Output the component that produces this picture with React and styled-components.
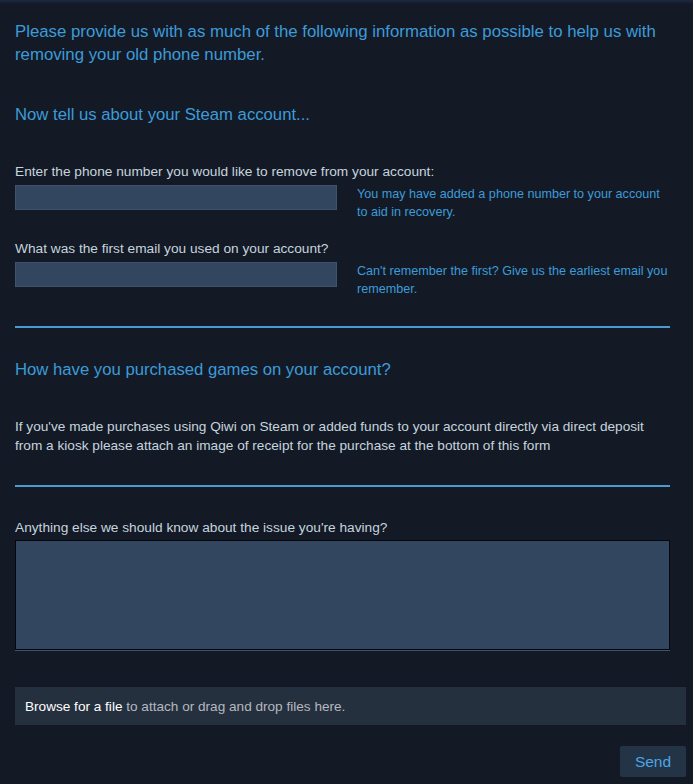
import React from "react";
import styled, { createGlobalStyle } from "styled-components";

const Global = createGlobalStyle`
  html, body { margin: 0; padding: 0; background: #131a25; }
  body { font-family: "Liberation Sans", Arial, sans-serif; }
`;

const Page = styled.div`
  min-height: 784px;
  box-sizing: border-box;
  background: linear-gradient(to bottom, #1a2a44 0px, #131a25 4px, #131a25 100%);
  padding: 20px 7px 7px 15px;
`;

const Fields = styled.div`
  width: 655px;
`;

const Intro = styled.p`
  margin: 0;
  font-size: 16.8px;
  line-height: 23px;
  color: #3d9bd9;
`;

const Heading = styled.h2`
  margin: ${(p) => p.$mt || 0}px 0 0;
  font-size: 16.7px;
  font-weight: normal;
  line-height: 22px;
  color: #3d9bd9;
`;

const Label = styled.div`
  margin-top: ${(p) => p.$mt || 0}px;
  font-size: 13.7px;
  line-height: 18px;
  color: #c6d4df;
`;

const FieldRow = styled.div`
  display: flex;
  align-items: flex-start;
  gap: 20px;
  margin-top: 4px;
`;

const TextInput = styled.input`
  width: 322px;
  height: 25px;
  box-sizing: border-box;
  margin: 0;
  padding: 0 6px;
  background: #32465f;
  border: 1px solid #3d536d;
  border-radius: 0;
  color: #c6d4df;
  outline: none;
  flex: none;
`;

const Hint = styled.div`
  margin-top: 0;
  font-size: 12.6px;
  line-height: 18px;
  color: #3d9bd9;
`;

const Divider = styled.hr`
  margin: ${(p) => p.$mt || 0}px 0 0;
  border: 0;
  height: 2px;
  background: #4b9ad2;
`;

const Para = styled.p`
  margin: ${(p) => p.$mt || 0}px 0 0;
  font-size: 13.65px;
  line-height: 19px;
  color: #c6d4df;
`;

const TextArea = styled.textarea`
  display: block;
  width: 655px;
  height: 110px;
  box-sizing: border-box;
  margin: 3px 0 0;
  padding: 6px;
  background: #32465f;
  border: 1px solid #05070b;
  box-shadow: 0 1px 0 #3d536d;
  resize: none;
  outline: none;
  color: #c6d4df;
`;

const DropZone = styled.div`
  margin-top: 37px;
  height: 38px;
  display: flex;
  align-items: center;
  padding: 0 10px;
  background: #25303f;
  font-size: 13.6px;
  color: #b3b9bf;
`;

const BrowseLink = styled.span`
  color: #ffffff;
  cursor: pointer;
`;

const Actions = styled.div`
  display: flex;
  justify-content: flex-end;
  margin-top: 21px;
`;

const SendButton = styled.button`
  width: 66px;
  height: 31px;
  border: 0;
  border-radius: 2px;
  background: #243447;
  color: #4aa6e6;
  font-family: inherit;
  font-size: 15.5px;
  cursor: pointer;
`;

export default function App() {
  return (
    <>
      <Global />
      <Page>
        <Fields>
          <Intro>
            Please provide us with as much of the following information as possible to help us with
            removing your old phone number.
          </Intro>
          <Heading $mt={38}>Now tell us about your Steam account...</Heading>
          <Label $mt={37}>Enter the phone number you would like to remove from your account:</Label>
          <FieldRow>
            <TextInput type="text" />
            <Hint>You may have added a phone number to your account to aid in recovery.</Hint>
          </FieldRow>
          <Label $mt={19}>What was the first email you used on your account?</Label>
          <FieldRow>
            <TextInput type="text" />
            <Hint>Can't remember the first? Give us the earliest email you remember.</Hint>
          </FieldRow>
          <Divider $mt={28} />
          <Heading $mt={31}>How have you purchased games on your account?</Heading>
          <Para $mt={36}>
            If you've made purchases using Qiwi on Steam or added funds to your account directly via direct deposit
            from a kiosk please attach an image of receipt for the purchase at the bottom of this form
          </Para>
          <Divider $mt={30} />
          <Label $mt={32}>Anything else we should know about the issue you're having?</Label>
          <TextArea />
        </Fields>
        <DropZone>
          <span>
            <BrowseLink>Browse for a file</BrowseLink> to attach or drag and drop files here.
          </span>
        </DropZone>
        <Actions>
          <SendButton>Send</SendButton>
        </Actions>
      </Page>
    </>
  );
}
